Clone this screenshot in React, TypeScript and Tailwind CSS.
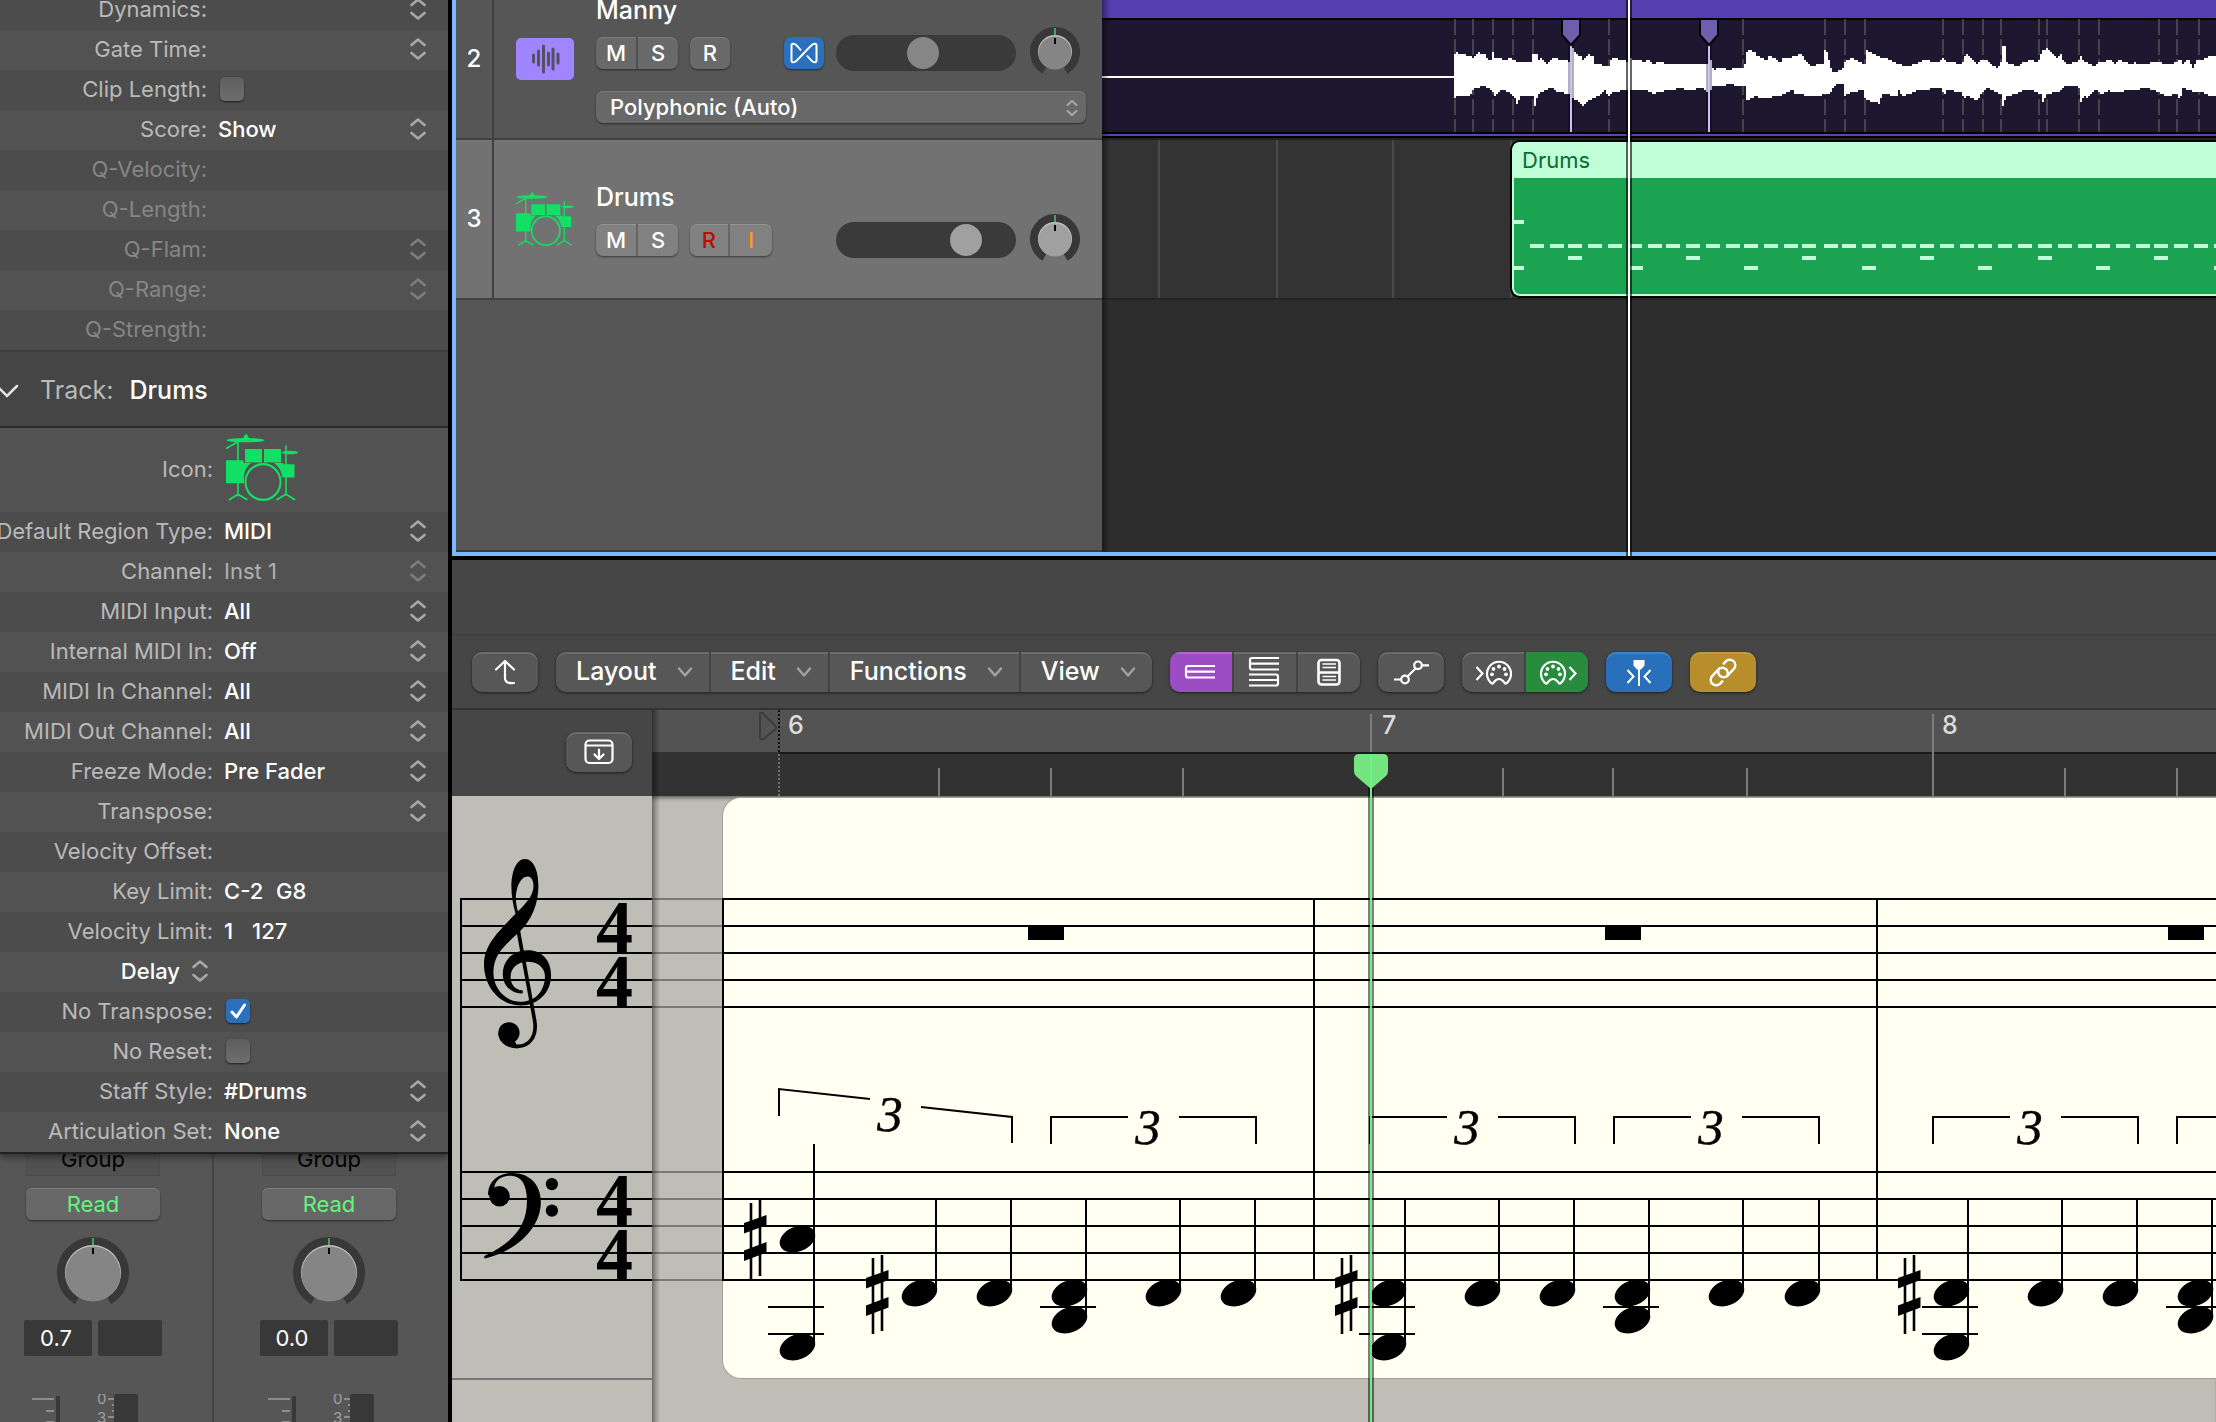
import React from "react";

type FieldType = {
  label: string;
  kind: "select" | "check" | "text" | "range" | "empty";
  value?: string;
  value2?: string;
  checked?: boolean;
  disabled?: boolean;
};

const regionFields: FieldType[] = [
  { label: "Dynamics", kind: "select" },
  { label: "Gate Time", kind: "select" },
  { label: "Clip Length", kind: "check" },
  { label: "Score", kind: "select", value: "Show" },
  { label: "Q-Velocity", kind: "text", disabled: true },
  { label: "Q-Length", kind: "text", disabled: true },
  { label: "Q-Flam", kind: "select", disabled: true },
  { label: "Q-Range", kind: "select", disabled: true },
  { label: "Q-Strength", kind: "text", disabled: true },
];

const trackFields: FieldType[] = [
  { label: "Default Region Type", kind: "select", value: "MIDI" },
  { label: "Channel", kind: "select", value: "Inst 1", disabled: true },
  { label: "MIDI Input", kind: "select", value: "All" },
  { label: "Internal MIDI In", kind: "select", value: "Off" },
  { label: "MIDI In Channel", kind: "select", value: "All" },
  { label: "MIDI Out Channel", kind: "select", value: "All" },
  { label: "Freeze Mode", kind: "select", value: "Pre Fader" },
  { label: "Transpose", kind: "select" },
  { label: "Velocity Offset", kind: "text" },
  { label: "Key Limit", kind: "range", value: "C-2", value2: "G8" },
  { label: "Velocity Limit", kind: "range", value: "1", value2: "127" },
  { label: "Delay", kind: "empty" },
  { label: "No Transpose", kind: "check", checked: true },
  { label: "No Reset", kind: "check" },
  { label: "Staff Style", kind: "select", value: "#Drums" },
  { label: "Articulation Set", kind: "select", value: "None" },
];

const UpDown = ({ className }: { className?: string }) => (
  <svg className={className} width="16" height="24" viewBox="0 0 16 24" fill="none" stroke="currentColor" strokeWidth="2.6" strokeLinecap="round" strokeLinejoin="round">
    <path d="M1.500 8 8 2.500 14.500 8M1.500 16 8 21.500 14.500 16" />
  </svg>
);

const Down = () => (
  <svg width="16" height="12" viewBox="0 0 16 12" fill="none" stroke="#a3a3a3" strokeWidth="2.4" strokeLinecap="round" strokeLinejoin="round">
    <path d="M2 2.5 8 9.5l6-7" />
  </svg>
);

const DrumKit = ({ width, height }: { width: number; height: number }) => (
  <svg className="shrink-0" width={width} height={height} viewBox="0 0 72 60" preserveAspectRatio="none" fill="#12e065" stroke="#12e065">
    <g stroke="none">
      <ellipse cx="19.500" cy="5.500" rx="19" ry="1.900" />
      <path d="M18 2.500a2 2 0 0 1 4 0l2 2.500h-8zM20 0h1v3h-1z" />
      <ellipse cx="64" cy="16.500" rx="8" ry="1.600" />
      <path d="M19 13.500h17v12H19zM38 13.500h17v12H38z" />
      <path d="M0 23.500h17l1 2.500h7c-4 3-6 6-7 11v7H0z" />
      <path d="M48 26h9v1h11.500v12H56.500c-1-6-4-10-8.500-13z" />
    </g>
    <g fill="none" strokeWidth="1.600">
      <path d="M12 6v50M0 13 13 6.500M60 10v45M12 54 3 59M12 54l9.500 5M60 54l-9.500 5M60 54l9 5" />
      <ellipse cx="37" cy="43" rx="17.500" ry="16" strokeWidth="2" />
    </g>
  </svg>
);

const Knob = ({ size, ring, face = "#858585" }: { size: number; ring: number; face?: string }) => {
  const c = size / 2;
  const r = c - ring / 2;
  const dx = r * 0.5;
  const dy = r * 0.866;
  return (
    <svg className="shrink-0" width={size} height={size}>
      <path d={`M${c - dx} ${c + dy}A${r} ${r} 0 1 1 ${c + dx} ${c + dy}`} fill="none" stroke="#383838" strokeWidth={ring} />
      <circle cx={c} cy={c} r={c - ring} fill="#c0c0c0" />
      <circle cx={c} cy={c + 1} r={c - ring - 0.5} fill={face} />
      <path d={`M${c} ${ring / 2 - 3}V${ring}`} stroke="#50c862" strokeWidth="1.500" />
      <path d={`M${c} ${ring + 3}v6`} stroke="#000" strokeWidth="2" />
    </svg>
  );
};

const Field = ({ item, wide, shade }: { item: FieldType; wide?: boolean; shade: string }) => {
  const id = item.label.toLowerCase().replace(/ /g, "-");
  const labelColor = item.disabled && !wide ? "text-[#868686]" : "text-[#bababa]";
  const valueColor = item.disabled ? "text-[#b0b0b0]" : "font-medium text-white";

  if (item.kind === "empty") {
    return (
      <div className={`flex h-10 items-center pb-[2px] ${shade}`}>
        <button className="flex w-[208px] items-center justify-end gap-3 font-medium text-white">
          {item.label}
          <UpDown className="text-[#a8a8a8]" />
        </button>
      </div>
    );
  }

  return (
    <div className={`flex h-10 items-center pr-[22px] pb-[2px] ${shade}`}>
      <label htmlFor={id} className={`flex shrink-0 justify-end whitespace-nowrap ${wide ? "w-[213px]" : "w-[207px]"} ${labelColor}`}>
        {item.label}:
      </label>
      <div className={`flex min-w-0 flex-1 items-center ${item.kind === "check" ? "pl-[13px]" : "pl-[11px]"}`}>
        {item.kind === "select" && (
          <>
            <select id={id} disabled={item.disabled} className={`min-w-0 flex-1 appearance-none bg-transparent disabled:opacity-100 ${valueColor}`}>
              <option>{item.value ?? ""}</option>
            </select>
            <UpDown className={item.disabled ? "text-[#7d7d7d]" : "text-[#a8a8a8]"} />
          </>
        )}
        {item.kind === "check" && (
          <span className="relative flex">
            <input
              id={id}
              type="checkbox"
              defaultChecked={item.checked}
              className="peer size-6 appearance-none rounded-[5px] bg-linear-to-b from-[#5e5e5e] to-[#6e6e6e] shadow-[0_1px_2px_rgba(0,0,0,0.6)] checked:from-[#2a70bd] checked:to-[#2a70bd]"
            />
            <svg className="pointer-events-none absolute inset-0 hidden peer-checked:block" width="24" height="24" viewBox="0 0 24 24" fill="none" stroke="#fff" strokeWidth="3" strokeLinecap="round" strokeLinejoin="round">
              <path d="m6 13 4.500 5L18.500 6" />
            </svg>
          </span>
        )}
        {item.kind === "text" && <input id={id} disabled={item.disabled} className="min-w-0 flex-1 bg-transparent" />}
        {item.kind === "range" && (
          <>
            <input id={id} defaultValue={item.value} className={`bg-transparent ${item.value === "1" ? "w-7" : "w-13"} ${valueColor}`} />
            <input aria-label={`${item.label} high`} defaultValue={item.value2} className={`w-20 bg-transparent ${valueColor}`} />
          </>
        )}
      </div>
    </div>
  );
};

const Strip = ({ volume }: { volume: string }) => (
  <div className="flex w-[236px] shrink-0 flex-col items-center border-r-2 border-[#454545] pr-1">
    <button className="-mt-3 h-[34px] w-[134px] border border-[#4c4c4c] bg-[#515151] text-black">Group</button>
    <button className="mt-3 h-8 w-[134px] rounded-md bg-[#676767] text-[#62f57f] shadow-[0_1px_2px_rgba(0,0,0,0.5),inset_0_1px_0_#7d7d7d]">Read</button>
    <div className="mt-[17px]">
      <Knob size={72} ring={8} />
    </div>
    <div className="mt-[11px] flex w-[138px] gap-[6px]">
      <input aria-label="Volume" defaultValue={volume} className="h-9 min-w-0 flex-1 rounded-[2px] bg-[#383838] pr-1 text-center text-white" />
      <div className="h-9 flex-1 rounded-[2px] bg-[#383838]"></div>
    </div>
    <svg className="mt-[38px] shrink-0" width="138" height="60" fill="none" stroke="#a0a0a0" strokeWidth="1.500">
      <path d="M8 5h22M22 17h8M22 28h8M84 5h6M88 11h2M88 17h2M84 23h6" />
      <rect x="32" y="2" width="4" height="60" rx="1" fill="#383838" stroke="none" />
      <rect x="90" y="0" width="24" height="62" rx="2" fill="#383838" stroke="none" />
      <g fill="#a0a0a0" stroke="none" fontSize="15">
        <text x="73" y="10">0</text>
        <text x="73" y="29">3</text>
      </g>
    </svg>
  </div>
);

const Inspector = () => (
  <aside className="flex w-[452px] shrink-0 flex-col overflow-hidden border-r-4 border-black bg-[#565656] text-[22px]">
    <section className="z-10 -mt-[10px] border-b-2 border-[#222] shadow-[0_2px_8px_rgba(0,0,0,0.55)]">
      {regionFields.map((item, key) => (
        <Field key={key} item={item} shade={key % 2 ? "bg-[#525252]" : "bg-[#4c4c4c]"} />
      ))}
      <h2 className="flex h-[78px] items-center border-t-2 border-b-2 border-t-[#3f3f3f] border-b-[#2b2b2b] bg-[#454545] pt-1 text-[25px]">
        <svg className="-ml-1" width="24" height="16" viewBox="0 0 24 16" fill="none" stroke="#e2e2e2" strokeWidth="2.500" strokeLinecap="round">
          <path d="M1 3 11 13 21 3" />
        </svg>
        <span className="ml-5 text-[#bababa]">Track:</span>
        <span className="ml-4 font-medium text-white">Drums</span>
      </h2>
      <div className="flex h-[84px] items-center bg-[#525252] pb-[2px] text-[#bababa]">
        <span className="w-[213px] text-right">Icon:</span>
        <button aria-label="Track icon" className="ml-[13px] -mt-1">
          <DrumKit width={72} height={67} />
        </button>
      </div>
      {trackFields.map((item, key) => (
        <Field key={key} wide item={item} shade={key % 2 ? "bg-[#525252]" : "bg-[#4c4c4c]"} />
      ))}
    </section>
    <section className="-ml-[22px] flex flex-1">
      <Strip volume="0.7" />
      <Strip volume="0.0" />
    </section>
  </aside>
);

const trackButton = "h-8 w-10 flex-1";

type TrackType = {
  number: number;
  name: string;
  level: number;
  selected?: boolean;
};

const TrackRow = ({ track }: { track: TrackType }) => {
  const group = `flex h-8 overflow-hidden rounded-[7px] text-[22px] font-medium text-white divide-x-2 shadow-[0_1px_2px_rgba(0,0,0,0.5),inset_0_1px_0_rgba(255,255,255,0.15)] ${
    track.selected ? "bg-[#818181] divide-[#666]" : "bg-[#696969] divide-[#505050]"
  }`;
  return (
    <div className={`flex h-[160px] border-b-2 border-[#414141] ${track.selected ? "bg-[#727272]" : "bg-[#565656]"}`}>
      <div className="flex w-[38px] items-center justify-center border-r-2 border-[#414141] text-2xl font-medium text-white">{track.number}</div>
      <div className="flex w-[102px] items-center justify-center">
        {track.selected ? (
          <DrumKit width={58} height={54} />
        ) : (
          <svg width="58" height="42" stroke="#555060" strokeWidth="3" strokeLinecap="round">
            <rect width="58" height="42" rx="5" fill="#9f85ff" stroke="none" />
            <path d="M17.500 17v7M22.500 13v14M27.500 8v26M32.500 15v12M37 11v20M42 16v9" />
          </svg>
        )}
      </div>
      <div className="flex min-w-0 flex-1 flex-col justify-center pr-4 pb-[2px]">
        <div className="text-[25px] leading-8 font-medium text-white">{track.name}</div>
        <div className="mt-[11px] flex h-8 items-center pr-[6px]">
          <div className={`${group} w-[82px]`}>
            <button className={trackButton}>M</button>
            <button className={trackButton}>S</button>
          </div>
          <div className={`${group} ml-3`}>
            <button className={track.selected ? "h-8 w-10 flex-1 text-[#b90d00]" : trackButton}>R</button>
            {track.selected && <button className="h-8 w-[42px] text-[#ff9f0a]">I</button>}
          </div>
          <div className="ml-auto flex h-8 items-center">
            {!track.selected && (
              <button aria-label="Flex" className="mr-3 flex h-8 w-10 items-center justify-center rounded-[7px] bg-[#2a70bd] shadow-[0_1px_2px_rgba(0,0,0,0.5)]">
                <svg width="28" height="22" viewBox="0 0 28 22" fill="none" stroke="#fff" strokeWidth="2" strokeLinejoin="round">
                  <path d="M1.500 3v16c0 1.500 2 1.700 4 .5C10 16 18 6 22.500 2.500c2-1.200 4-1 4 .5v16c0 1.500-2 1.700-4 .5-2.500-2-4-4-5.500-6M11 8.500C9.500 6.500 8 4.500 5.500 2.500c-2-1.200-4-1-4 .5" />
                </svg>
              </button>
            )}
            <input
              type="range"
              aria-label={`${track.name} volume`}
              defaultValue={track.level}
              className={`h-9 w-[180px] appearance-none rounded-full bg-[#3a3a3a] px-[2px] [&::-webkit-slider-thumb]:size-8 [&::-webkit-slider-thumb]:appearance-none [&::-webkit-slider-thumb]:rounded-full ${
                track.selected ? "[&::-webkit-slider-thumb]:bg-[#a0a0a0]" : "[&::-webkit-slider-thumb]:bg-[#868686]"
              }`}
            />
            <div className="ml-[14px] pb-[2px]">
              <Knob size={50} ring={8} face={track.selected ? "#a0a0a0" : "#858585"} />
            </div>
          </div>
        </div>
        {!track.selected && (
          <div className="relative mt-[22px] flex text-[#a8a8a8]">
            <select aria-label="Flex mode" className="h-8 w-full appearance-none rounded-[7px] bg-[#686868] px-[14px] text-[22px] leading-8 font-medium text-white shadow-[0_1px_2px_rgba(0,0,0,0.5),inset_0_1px_0_#7b7b7b]">
              <option>Polyphonic (Auto)</option>
            </select>
            <svg className="pointer-events-none absolute top-2 right-2" width="12" height="18" viewBox="0 0 12 18" fill="none" stroke="currentColor" strokeWidth="2" strokeLinecap="round" strokeLinejoin="round">
              <path d="m1.500 6 4.500-4 4.500 4M1.500 12 6 16l4.500-4" />
            </svg>
          </div>
        )}
      </div>
    </div>
  );
};

// Peaks as x, y pairs; each part has its own origin and x zoom, y is in thirds of a pixel.
const waveParts = [
  {
    origin: -2,
    zoom: 2.8,
    top: [991, 168, 997, 157, 1010, 162, 1040, 168, 1047, 175, 1052, 162, 1060, 157, 1078, 163, 1083, 175, 1094, 185, 1100, 157, 1105, 174, 1140, 179, 1146, 175, 1165, 180, 1170, 186, 1209, 186, 1212, 163, 1224, 164, 1226, 180, 1238, 175, 1252, 190, 1266, 175, 1302, 180, 1318, 186, 1322, 138, 1333, 162, 1346, 168, 1353, 180, 1360, 172, 1366, 163, 1380, 168, 1386, 190, 1418, 198, 1424, 204, 1430, 180, 1440, 175, 1468, 180, 1475, 186, 1490, 174, 1496, 186, 1500, 174, 1506, 186, 1512, 174, 1522, 186, 1530, 180, 1550, 186, 1552, 192],
    bottom: [991, 294, 1003, 288, 1020, 285, 1030, 292, 1040, 280, 1047, 268, 1062, 262, 1072, 257, 1090, 264, 1106, 287, 1115, 276, 1128, 270, 1145, 276, 1160, 288, 1168, 311, 1178, 288, 1212, 288, 1218, 317, 1225, 288, 1235, 275, 1265, 264, 1280, 276, 1316, 282, 1326, 294, 1340, 306, 1353, 317, 1363, 305, 1385, 294, 1400, 285, 1412, 270, 1425, 286, 1440, 276, 1475, 270, 1530, 270, 1552, 280],
  },
  {
    origin: 548,
    zoom: 2.77,
    top: [0, 186, 10, 192, 20, 188, 60, 190, 160, 192, 166, 168, 172, 198, 180, 210, 190, 204, 220, 208, 250, 204, 262, 204, 266, 162, 276, 150, 290, 156, 298, 168, 325, 180, 330, 168, 355, 180, 360, 192, 368, 175, 390, 175, 395, 168, 420, 162, 428, 174, 432, 186, 445, 198, 480, 192, 483, 150, 490, 156, 498, 192, 505, 216, 534, 210, 538, 185, 550, 180, 560, 174, 585, 186, 595, 198, 599, 145, 606, 156, 625, 163, 640, 174, 655, 174, 685, 192, 712, 198, 740, 192, 755, 180, 800, 186, 812, 175, 825, 186, 865, 192, 875, 162, 890, 174, 905, 192, 925, 175, 945, 192, 960, 204, 972, 192, 976, 138, 984, 140, 987, 180, 992, 192, 1020, 198, 1035, 186, 1055, 180, 1075, 186, 1085, 155, 1098, 145, 1110, 156, 1130, 174, 1136, 157, 1145, 180, 1155, 192, 1185, 186, 1192, 168, 1200, 180, 1215, 192, 1235, 198, 1245, 186, 1280, 180, 1290, 192, 1300, 180, 1330, 192, 1345, 188, 1355, 194, 1400, 186, 1440, 192, 1460, 186, 1468, 174, 1475, 192, 1490, 175, 1505, 204, 1515, 180, 1530, 180, 1550, 170, 1568, 168, 1800, 168],
    bottom: [0, 276, 12, 282, 20, 276, 60, 270, 80, 264, 105, 270, 150, 264, 165, 290, 172, 258, 190, 258, 220, 254, 264, 258, 268, 300, 290, 290, 325, 294, 345, 290, 360, 288, 380, 276, 395, 270, 400, 282, 450, 288, 500, 282, 505, 264, 520, 252, 537, 252, 540, 288, 560, 276, 592, 270, 597, 300, 625, 306, 635, 310, 645, 282, 685, 288, 690, 270, 700, 288, 720, 282, 745, 270, 805, 264, 815, 282, 825, 270, 860, 276, 870, 294, 885, 288, 900, 300, 912, 294, 920, 276, 935, 264, 960, 276, 972, 282, 978, 318, 988, 288, 1015, 282, 1035, 270, 1055, 270, 1085, 282, 1088, 306, 1098, 282, 1130, 276, 1155, 255, 1188, 258, 1192, 306, 1205, 288, 1212, 296, 1225, 276, 1240, 270, 1250, 282, 1270, 272, 1290, 276, 1380, 264, 1410, 276, 1430, 288, 1460, 282, 1468, 300, 1477, 264, 1490, 270, 1515, 276, 1530, 276, 1550, 288, 1568, 288, 1800, 288],
  },
];

const sample = (pairs: number[], at: number) => {
  for (let i = 2; i < pairs.length; i += 2) {
    if (at <= pairs[i]) {
      const t = Math.max(0, (at - pairs[i - 2]) / (pairs[i] - pairs[i - 2]));
      return pairs[i - 1] + (pairs[i + 1] - pairs[i - 1]) * t;
    }
  }
  return pairs[pairs.length - 1];
};

const wavePath = () => {
  let d = "";
  for (let x = 352; x < 1180; x += 2) {
    const part = x < 548 ? waveParts[0] : waveParts[1];
    const at = (x + 1 - part.origin) * part.zoom;
    const top = Math.round(sample(part.top, at) / 6) * 2 + 20;
    const bottom = Math.round(sample(part.bottom, at) / 6) * 2 + 20;
    d += `M${x} ${top}h2V${bottom}h-2z`;
  }
  return d;
};

const transients = [353, 371, 391, 411, 431, 507, 641, 723, 743, 763, 841, 861, 881, 899, 937, 945, 977, 997, 1057, 1075, 1097];
const flexMarkers = [469, 607];
const gridLines = [57, 175, 291, 409, 527, 643, 761, 877, 995, 1112];
const hits = [20, 40, 58, 78, 98, 118, 138, 156, 176, 196, 216, 234, 254, 274, 292, 314, 332, 352, 372, 392, 410, 430, 450, 468, 488, 508, 528, 548, 568, 586, 606, 626, 644, 664, 684, 704];
const snares = [58, 176, 292, 410, 528, 644];
const kicks = [119, 234, 352, 468, 586, 704];

const Arrange = () => (
  <div className="relative flex min-w-0 flex-1 flex-col bg-[#2d2d2d]">
    <div className="flex min-h-0 flex-1 flex-col overflow-hidden">
      <svg className="-mt-5 h-[160px] w-full shrink-0 bg-[#1e1730]">
        <rect width="100%" height="38" fill="#553eae" />
        <rect y="38" width="100%" height="2" fill="#000" />
        <path d={transients.map((x) => `M${x} 39V152`).join("")} stroke="#46414f" strokeWidth="2" strokeDasharray="16 4" />
        <rect y="96" width="353" height="2" fill="#fff" />
        <path d={wavePath()} fill="#fff" />
        {flexMarkers.map((x) => (
          <g key={x}>
            <rect x={x - 3} y="62" width="6" height="90" fill="#000" opacity="0.3" />
            <rect x={x - 1} y="60" width="2" height="93" fill="#c9bdfb" />
            <path d={`M${x - 9} 39h18v16l-9 10-9-10z`} fill="#6f5eab" stroke="#000" strokeWidth="2" />
          </g>
        ))}
        <rect y="152" width="100%" height="8" fill="#000" />
        <rect y="154" width="100%" height="2" fill="#5a43b5" />
        <rect y="158" width="100%" height="2" fill="#222" />
      </svg>
      <div className="relative h-[160px] shrink-0 border-b-2 border-[#242424] bg-[#333]">
        <svg className="absolute inset-0 h-full w-full">
          <path d={gridLines.map((x) => `M${x} 0V160`).join("")} stroke="#4a4a4a" strokeWidth="2" />
        </svg>
        <div className="relative ml-[408px] h-[158px] overflow-hidden rounded-l-[10px] border-y-2 border-l-2 border-black bg-[#1ba352]">
          <div className="h-full rounded-l-lg border-b-2 border-l-2 border-[#c0ffd8]">
            <div className="h-9 bg-[#c0ffd8] pl-2 text-[22px] leading-9 text-[#0b6b30]">Drums</div>
            <svg className="h-[116px] w-full" fill="#c0ffd8">
              <rect y="42" width="10" height="4" />
              <rect y="88" width="10" height="4" />
              {hits.map((x) => (
                <rect key={x} x={x - 4} y="66" width="14" height="4" />
              ))}
              {snares.map((x) => (
                <rect key={x} x={x - 4} y="78" width="14" height="4" />
              ))}
              {kicks.map((x) => (
                <rect key={x} x={x - 4} y="88" width="14" height="4" />
              ))}
            </svg>
          </div>
        </div>
      </div>
    </div>
    <div className="absolute inset-y-0 left-0 w-2 bg-linear-to-r from-black/40 to-transparent"></div>
    <div className="absolute top-0 -bottom-1 left-[524px] w-[6px] border-x-2 border-black/60 bg-white bg-clip-padding"></div>
  </div>
);

const menus = ["Layout", "Edit", "Functions", "View"];
const raised = "h-10 shrink-0 rounded-[10px] bg-[#575757] shadow-[0_1px_3px_rgba(0,0,0,0.6),inset_0_2px_0_rgba(255,255,255,0.12)]";

const Palette = ({ x }: { x: number }) => (
  <g>
    <path d={`M${x - 7} 31.500A12 12 0 1 1 ${x + 7} 31.500C${x + 5} 32.500 ${x + 5} 27 ${x} 27C${x - 5} 27 ${x - 5} 32.500 ${x - 7} 31.500z`} />
    <g fill="#fff" stroke="none">
      <circle cx={x} cy="14.500" r="1.900" />
      <circle cx={x - 5.5} cy="17" r="1.900" />
      <circle cx={x + 5.5} cy="17" r="1.900" />
      <circle cx={x - 7} cy="22.300" r="1.900" />
      <circle cx={x + 7} cy="22.300" r="1.900" />
    </g>
  </g>
);

const Toolbar = () => (
  <div className="flex h-[74px] items-center gap-[18px] border-b-2 border-[#333] px-5">
    <button aria-label="Leave folder" className={`${raised} flex w-[66px] items-center justify-center`}>
      <svg width="24" height="28" viewBox="0 0 24 28" fill="none" stroke="#fff" strokeWidth="2.200" strokeLinecap="round" strokeLinejoin="round">
        <path d="M3 11.500 12 3l9 8.500M12 3v17c0 4 3 5.500 9 5" />
      </svg>
    </button>
    <div className={`${raised} flex divide-x-2 divide-[#434343]`}>
      {menus.map((menu) => (
        <button key={menu} className="flex items-center gap-5 pr-4 pl-5 text-[25px] font-medium text-white">
          {menu}
          <Down />
        </button>
      ))}
    </div>
    <div className={`${raised} flex w-[190px] overflow-hidden divide-x-2 divide-[#434343]`}>
      <button aria-label="Linear view" className="flex-1 bg-[#9c4dc4] shadow-[inset_0_2px_0_rgba(255,255,255,0.15)]">
        <svg width="62" height="40" fill="none" stroke="#fff" strokeWidth="2.200">
          <path d="M45 14H18q-2 0-2 2v7.500q0 2 2 2H45M16 19.700H45" />
        </svg>
      </button>
      <button aria-label="Wrapped view" className="flex-1">
        <svg width="62" height="40" fill="none" stroke="#fff" strokeWidth="2.200">
          <path d="M45 6H18q-2 0-2 2v7.500q0 2 2 2H45M16 11.700H45M15 22.500H42q2 0 2 2V31.500q0 2-2 2H15M15 28H44" />
        </svg>
      </button>
      <button aria-label="Page view" className="flex-1">
        <svg width="62" height="40" fill="none" stroke="#fff" strokeWidth="2.600">
          <rect x="20.500" y="8" width="21" height="24.500" rx="3" />
          <path d="M21 20.500H41" />
          <path d="M24.500 12H38M24.500 15.500H38M24.500 24.500H38M24.500 28H38" strokeWidth="1.500" />
        </svg>
      </button>
    </div>
    <button aria-label="Automation" className={`${raised} w-[66px]`}>
      <svg width="66" height="40" fill="none" stroke="#fff" strokeWidth="2.200">
        <path d="M16 27.500H23M29.500 24.500 38 16M43.500 13.300H51" />
        <circle cx="27" cy="27.500" r="3.800" />
        <circle cx="40" cy="13.300" r="3.800" />
      </svg>
    </button>
    <div className={`${raised} flex w-[126px] overflow-hidden divide-x-2 divide-[#434343]`}>
      <button aria-label="MIDI in" className="flex-1">
        <svg width="61" height="40" fill="none" stroke="#fff" strokeWidth="2.200">
          <path d="m14.500 15 6 6.500-6 6.500" />
          <Palette x={37} />
        </svg>
      </button>
      <button aria-label="MIDI out" className="flex-1 bg-[#288b3d]">
        <svg width="61" height="40" fill="none" stroke="#fff" strokeWidth="2.200">
          <path d="m43.500 15 6 6.500-6 6.500" />
          <Palette x={27} />
        </svg>
      </button>
    </div>
    <button aria-label="Catch playhead" className={`${raised} w-[66px] !bg-[#2870bc]`}>
      <svg width="66" height="40" fill="none" stroke="#fff" strokeWidth="2">
        <path d="m21.500 18 6 6.500-6 6.500M44.500 18l-6 6.500 6 6.500M33 16V34" />
        <path d="M27.500 8h11v5.500L35 17.500h-4l-3.500-4z" fill="#fff" stroke="none" />
      </svg>
    </button>
    <button aria-label="Link" className={`${raised} w-[66px] !bg-[#b88e2c]`}>
      <svg width="66" height="40" fill="none" stroke="#fff" strokeWidth="2.400">
        <g transform="rotate(-47 33 20.500)">
          <path d="M27 26H23a5.500 5.500 0 0 1 0-11H32a5.500 5.500 0 0 1 0 11" />
          <path d="M39 15H43a5.500 5.500 0 0 1 0 11H34a5.500 5.500 0 0 1 0-11" />
        </g>
      </svg>
    </button>
  </div>
);

const staffY = [103, 130, 157, 184, 211, 376, 403, 430, 457, 484];
const signatureY = [156, 210, 429, 483];

const TimeSignature = () => (
  <g fontFamily="Liberation Serif, serif" fontWeight="700" fontSize="74">
    {signatureY.map((y) => (
      <text key={y} x="144" y={y}>
        4
      </text>
    ))}
  </g>
);

const ClefPane = () => (
  <svg className="h-full w-full">
    <path d={staffY.map((y) => `M8 ${y}H200`).join("") + "M9 102V485"} stroke="#000" strokeWidth="2" />
    <g transform="translate(32 63) scale(0.409) translate(-83 -194)">
      <path
        fillRule="evenodd"
        d="M150 262C150 225 162 194 183 194C205 194 216 225 216 258C216 305 200 342 168 374C135 405 106 425 106 472C106 510 135 543 172 543C210 543 232 515 232 480C232 460 215 445 190 445C165 445 148 460 148 482C148 502 160 514 176 515C179 517 179 522 175 523C150 522 129 505 129 475C129 440 155 417 190 417C225 417 247 442 247 478C247 520 215 552 172 552C120 552 83 505 83 452C83 405 115 375 160 328C154 305 150 285 150 262ZM166 322C190 299 204 280 204 260C204 246 198 237 190 237C172 237 161 265 161 290C161 302 163 312 166 322Z"
      />
      <path d="M166 365 207 590C213 630 192 652 166 652C155 652 146 650 138 644" fill="none" stroke="#000" strokeWidth="9" />
      <circle cx="144" cy="619" r="26" />
      <path d="M118 619C118 645 142 657 166 657L158 638Z" />
    </g>
    <g transform="translate(32 377) scale(0.409) translate(-83 -961)">
      <path d="M93 1015C93 980 120 961 152 961C195 961 222 990 222 1032C222 1095 165 1150 86 1170C82 1168 83 1165 86 1163C155 1130 188 1090 188 1030C188 990 175 968 148 968C125 968 108 980 108 1000L100 1018Z" />
      <circle cx="121" cy="1018" r="25" />
      <circle cx="249" cy="988" r="15" />
      <circle cx="249" cy="1053" r="15" />
    </g>
    <TimeSignature />
    <path d="M0 583H200" stroke="#777" strokeWidth="2" />
  </svg>
);

type NoteType = {
  x: number;
  heads: number[];
  top?: number;
  ledger?: number[];
};

const notes: NoteType[] = [
  { x: 162, heads: [443, 551], top: 348, ledger: [511, 538] },
  { x: 284, heads: [497] },
  { x: 359, heads: [497] },
  { x: 434, heads: [497, 524], ledger: [511] },
  { x: 528, heads: [497] },
  { x: 603, heads: [497] },
  { x: 753, heads: [497, 551], ledger: [511, 538] },
  { x: 847, heads: [497] },
  { x: 922, heads: [497] },
  { x: 997, heads: [497, 524], ledger: [511] },
  { x: 1091, heads: [497] },
  { x: 1167, heads: [497] },
  { x: 1316, heads: [497, 551], ledger: [511, 538] },
  { x: 1410, heads: [497] },
  { x: 1485, heads: [497] },
  { x: 1560, heads: [497, 524], ledger: [511] },
];

const sharps = [
  [92, 404],
  [214, 459],
  [683, 459],
  [1246, 459],
];
const triplets = [399, 718, 962, 1281, 1525];
const barLines = [71, 662, 1225];
const rests = [376, 953, 1516];

const Score = () => (
  <svg className="absolute inset-0 h-full w-full">
    {staffY.map((y) => (
      <g key={y} strokeWidth="2">
        <line x1="0" x2="71" y1={y} y2={y} stroke="#7b7b75" />
        <line x1="71" x2="100%" y1={y} y2={y} stroke="#000" />
      </g>
    ))}
    <path d={barLines.map((x) => `M${x} 102V485`).join("")} stroke="#000" strokeWidth="2" />
    {rests.map((x) => (
      <rect key={x} x={x} y="130" width="36" height="14" />
    ))}
    <g fill="none" stroke="#000" strokeWidth="2">
      <path d="M127 320V293L218 303M269 311 360 321V347" />
      {triplets.map((x) => (
        <path key={x} d={`M${x} 348V321h77M${x + 128} 321h77v27`} />
      ))}
    </g>
    <g fontFamily="Liberation Serif, serif" fontStyle="italic" fontSize="51" textAnchor="middle" stroke="#000" strokeWidth="0.500">
      <text x="238" y="335">3</text>
      {triplets.map((x) => (
        <text key={x} x={x + 97} y="348">
          3
        </text>
      ))}
    </g>
    {sharps.map(([x, y]) => (
      <g key={x} transform={`translate(${x} ${y})`}>
        <path d="M0 23 22.500 15V25L0 33.500zM0 50.500 22.500 42V52.500L0 61z" />
        <path d="M7 3V79M16 0V76" stroke="#000" strokeWidth="2.600" />
      </g>
    ))}
    {notes.map((note) => (
      <g key={note.x}>
        {note.heads.map((y) => (
          <ellipse key={y} cx={note.x - 16.5} cy={y} rx="18.500" ry="12.500" transform={`rotate(-22 ${note.x - 16.5} ${y})`} />
        ))}
        <path d={`M${note.x} ${note.top ?? 403}V${note.heads[note.heads.length - 1] - 6}`} stroke="#000" strokeWidth="2" />
        {note.ledger?.map((y) => (
          <path key={y} d={`M${note.x - 46} ${y}h56`} stroke="#000" strokeWidth="2" />
        ))}
      </g>
    ))}
  </svg>
);

const beats = [287, 399, 531, 851, 961, 1095, 1413, 1525];

const Ruler = () => (
  <svg className="h-[86px] w-full shrink-0">
    <rect width="100%" height="42" fill="#535353" />
    <rect y="42" width="100%" height="44" fill="#323232" />
    <rect x="127" y="42" width="100%" height="2" fill="#1a1a1a" />
    <path d="M127 0V42" stroke="#111" strokeWidth="2" strokeDasharray="2 2" />
    <path d="M127 44V86" stroke="#707070" strokeWidth="2" strokeDasharray="2 2" />
    <path d="M108 3.500q2-2 4 1l11 11q2 2 0 4l-11 9q-4 2-4-1z" fill="none" stroke="#3c3c3c" strokeWidth="2" />
    <path d={beats.map((x) => `M${x} 58V86`).join("") + "M719 4V42M1281 4V86"} stroke="#7c7c7c" strokeWidth="2" />
    <g fill="#dcdcdc" fontSize="25" fontWeight="500">
      <text x="136" y="24">6</text>
      <text x="730" y="24">7</text>
      <text x="1290" y="24">8</text>
    </g>
  </svg>
);

const ScoreEditor = () => (
  <section className="flex min-h-0 flex-1 flex-col bg-[#464646]">
    <div className="h-[76px] shrink-0 border-b-2 border-[#3f3f3f]"></div>
    <Toolbar />
    <div className="flex min-h-0 flex-1">
      <div className="flex w-[200px] shrink-0 flex-col bg-[#bfbeb6]">
        <div className="flex h-[86px] shrink-0 items-center justify-end bg-[#464646] pr-5 pb-[2px]">
          <button aria-label="Part box" className={`${raised} flex w-[66px] items-center justify-center`}>
            <svg width="30" height="26" viewBox="0 0 30 26" fill="none" stroke="#fff" strokeWidth="2.200" strokeLinecap="round" strokeLinejoin="round">
              <rect x="1.500" y="1.500" width="27" height="22.500" rx="4" />
              <path d="M2 6.500H28M15 10.500V19.500M10.500 15.500 15 20l4.500-4.500" />
            </svg>
          </button>
        </div>
        <div className="min-h-0 flex-1">
          <ClefPane />
        </div>
      </div>
      <div className="relative flex min-w-0 flex-1 flex-col bg-[#bfbeb6]">
        <Ruler />
        <div className="relative min-h-0 flex-1 overflow-hidden shadow-[inset_0_4px_4px_-2px_rgba(0,0,0,0.5)]">
          <div className="mt-[2px] ml-[71px] h-[580px] rounded-l-[18px] bg-[#fffff2] shadow-[0_0_0_1px_#a0a097]"></div>
          <Score />
        </div>
        <div className="absolute inset-y-0 left-0 w-2 bg-linear-to-r from-black/40 to-transparent"></div>
        <div className="absolute top-[76px] bottom-0 left-[716px] w-[6px] border-x-2 border-black/50 bg-[#6fee86] bg-clip-padding"></div>
        <svg className="absolute top-[44px] left-[702px]" width="34" height="36" fill="#75e57f">
          <path d="M5 0h24q5 0 5 5v12q0 3-2 5L17 35 2 22q-2-2-2-5V5q0-5 5-5z" />
          <path d="M17 0V35" stroke="#6ef486" strokeWidth="2" />
        </svg>
      </div>
    </div>
  </section>
);

const App = () => {
  return (
    <div className="flex h-screen w-full overflow-hidden bg-black font-['Inter',sans-serif]">
      <Inspector />
      <main className="flex min-w-0 flex-1 flex-col">
        <section className="flex h-[560px] shrink-0 border-b-4 border-black">
          <div className="flex min-w-0 flex-1 border-b-4 border-l-4 border-[#7cb8ff]">
            <div className="w-[646px] shrink-0 overflow-hidden border-b-2 border-[#3a3a3a] bg-[#565656]">
              <div className="-mt-5">
                <TrackRow track={{ number: 2, name: "Manny", level: 48 }} />
                <TrackRow track={{ number: 3, name: "Drums", level: 78, selected: true }} />
              </div>
            </div>
            <Arrange />
          </div>
        </section>
        <ScoreEditor />
      </main>
    </div>
  );
};

export default App;
